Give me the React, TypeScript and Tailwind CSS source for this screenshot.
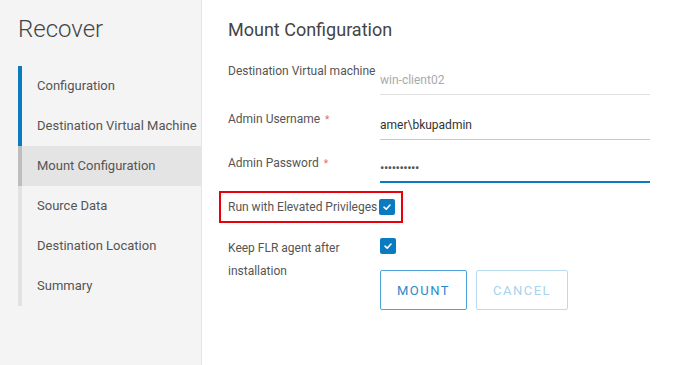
import React from 'react';

const steps = [
  { label: 'Configuration', state: 'done' },
  { label: 'Destination Virtual Machine', state: 'done' },
  { label: 'Mount Configuration', state: 'active' },
  { label: 'Source Data', state: 'todo' },
  { label: 'Destination Location', state: 'todo' },
  { label: 'Summary', state: 'todo' },
];

const Check = () => (
  <span className="flex h-4 w-4 items-center justify-center rounded-[2px] bg-[#0a7ac1]">
    <svg width="10" height="10" viewBox="0 0 10 10" fill="none">
      <path d="M2 5.2 L4.2 7.2 L8 3" stroke="white" strokeWidth="1.6" strokeLinecap="round" strokeLinejoin="round" />
    </svg>
  </span>
);

export default function App() {
  return (
    <div className="flex h-[365px] w-[683px] overflow-hidden bg-white font-['Roboto',sans-serif]">
      {/* Sidebar */}
      <aside className="w-[202px] shrink-0 border-r border-[#e6e6e6] bg-[#f4f4f4]">
        <h1 className="ml-[18px] mt-[14px] text-[24px] font-light leading-[30px] text-[#444]">Recover</h1>
        <ul className="ml-[18px] mt-[22px]">
          {steps.map((s) => (
            <li
              key={s.label}
              className={`flex h-10 items-center border-l-4 pl-[15px] text-[13px] text-[#555] ${
                s.state === 'done'
                  ? 'border-[#0a7ac1]'
                  : s.state === 'active'
                  ? 'border-[#bdbdbd] bg-[#e4e4e4]'
                  : 'border-[#e2e2e2]'
              }`}
            >
              {s.label}
            </li>
          ))}
        </ul>
      </aside>

      {/* Main */}
      <main className="flex-1 pl-[26px] pt-[18px]">
        <h2 className="text-[18px] leading-[24px] text-[#444]">Mount Configuration</h2>

        <div className="mt-[19px] w-[422px] text-[12px] text-[#555]">
          <div className="flex h-[40px]">
            <span className="w-[152px] shrink-0 pt-[1px]">Destination Virtual machine</span>
            <div className="flex h-[34px] flex-1 items-end border-b border-[#e0e0e0] pb-[5px] text-[#aaa]">win-client02</div>
          </div>

          <div className="mt-[6px] flex h-[43px]">
            <span className="w-[152px] shrink-0 pt-[3px]">
              Admin Username <span className="ml-[2px] text-[10px] text-[#e8685e]">*</span>
            </span>
            <div className="flex h-[33px] flex-1 items-end border-b border-[#c8c8c8] pb-[5px] text-[#333]">amer\bkupadmin</div>
          </div>

          <div className="flex h-[40px]">
            <span className="w-[152px] shrink-0 pt-[4px]">
              Admin Password <span className="ml-[2px] text-[10px] text-[#e8685e]">*</span>
            </span>
            <div className="flex h-[33px] flex-1 items-end border-b-2 border-[#0a7ac1] pb-[4px] text-[13px] tracking-[-0.5px] text-[#555]">
              ••••••••••
            </div>
          </div>
        </div>

        <div className="mt-[1px] -ml-[9px] flex h-[32px] w-[184px] items-center border-2 border-[#e8000b] pl-[7px] text-[12px] text-[#555]">
          <span className="w-[151px] shrink-0">Run with Elevated Privileges</span>
          <Check />
        </div>

        <div className="mt-[12px] flex text-[12px] leading-[23px] text-[#555]">
          <span className="w-[152px] shrink-0 pt-[2px]">
            Keep FLR agent after
            <br />
            installation
          </span>
          <div className="flex flex-col pt-[3px]">
            <Check />
            <div className="mt-[16px] flex gap-[9px]">
              <button className="h-[40px] w-[87px] rounded-[2px] border border-[#4ea3d8] text-[13px] tracking-[1.5px] text-[#2b8ac9]">
                MOUNT
              </button>
              <button className="h-[40px] w-[92px] rounded-[2px] border border-[#b9dbf0] text-[13px] tracking-[1.5px] text-[#a9d2ec]">
                CANCEL
              </button>
            </div>
          </div>
        </div>
      </main>
    </div>
  );
}
